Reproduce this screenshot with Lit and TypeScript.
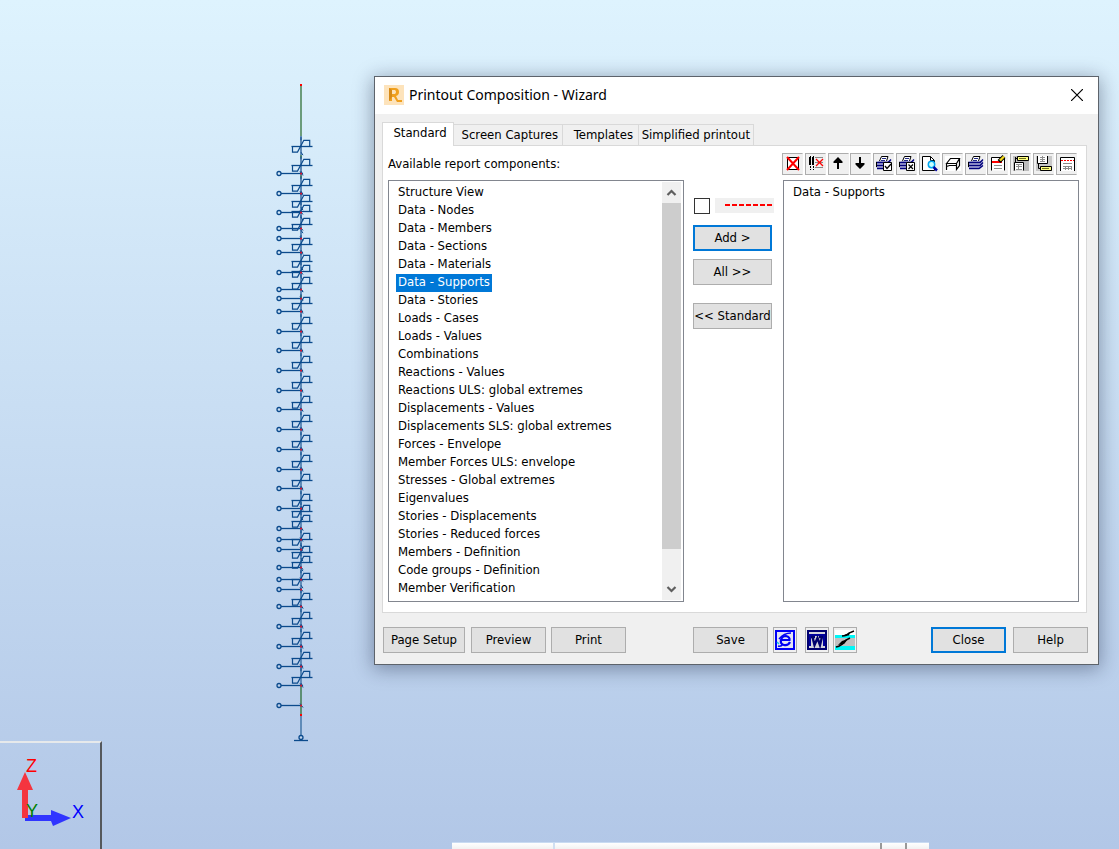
import { LitElement, html, svg, css } from "lit";
import { customElement, property, state } from "lit/decorators.js";

const COMPONENTS = [
  "Structure View", "Data - Nodes", "Data - Members", "Data - Sections", "Data - Materials",
  "Data - Supports", "Data - Stories", "Loads - Cases", "Loads - Values", "Combinations",
  "Reactions - Values", "Reactions ULS: global extremes", "Displacements - Values",
  "Displacements SLS: global extremes", "Forces - Envelope", "Member Forces ULS: envelope",
  "Stresses - Global extremes", "Eigenvalues", "Stories - Displacements",
  "Stories - Reduced forces", "Members - Definition", "Code groups - Definition",
  "Member Verification",
];

/* Heights of the rotational releases and of the lateral supports along the mast. */
const RELEASES = [
  146, 165, 185, 201, 211, 224, 244, 261, 271, 283, 303, 323, 342, 362, 382, 402, 421, 441,
  461, 480, 500, 511, 521, 539, 552, 562, 579, 599, 618, 638, 658, 677,
];
const SUPPORTS = [
  173, 193, 212, 228, 238, 252, 272, 289, 298, 311, 331, 350, 370, 390, 409, 429, 449, 469,
  488, 508, 528, 539, 549, 567, 579, 589, 606, 626, 646, 666, 685, 705,
];

@customElement("mast-model")
class MastModel extends LitElement {
  static styles = css`
    :host { display: block; }
    svg { display: block; }
    .ink { fill: none; stroke: #0b4a8c; stroke-width: 1.3; }
  `;
  render() {
    return html`<svg width="60" height="670" viewBox="265 80 60 670" aria-label="Mast model">
      <path d="M301 84V136" stroke="#6b9c7b" stroke-width="2" />
      <path d="M301 136V736" stroke="#5f8bb8" stroke-width="2" />
      <path d="M301 155V158M301 175V178M301 295V298M301 686V714" stroke="#5c8f74" stroke-width="2" />
      ${RELEASES.map((y) => svg`<g class="ink" transform="translate(301 ${y}.2)">
        <path d="M-9.500 .3H11.500" /><path d="M-8.500 0V5.900H-3.500L2.800-5.900H8.700V0" stroke-width="1.200" />
        <path d="M0-9V-6M0 6L2 9" stroke-width="1" /></g>`)}
      ${SUPPORTS.map((y) => svg`<g class="ink" transform="translate(301 ${y}.5)">
        <circle cx="-22" r="2" /><path d="M-20 0H1" /><path d="M-1-2L2 2" stroke-width="1" />
        <rect x="-.8" y="-.8" width="1.800" height="1.800" fill="#e0102a" stroke="none" /></g>`)}
      <path d="M300 84h2v2h-2zM300 714h2v2h-2z" fill="#f00" />
      <g class="ink"><circle cx="301" cy="737.500" r="2" fill="#c3d7ee" /><path d="M294 740.500H308" /></g>
    </svg>`;
  }
}

const printer = svg`
  <path d="M6.500 8L8.500 3.500H15L13.500 8" fill="#fff" stroke="#000" />
  <path d="M9 5.500H13M8 7.500H12" stroke="#222a88" />
  <path d="M3 10L6 8H15L18 7V13L15 16H5L3 14Z" fill="#b4b4dc" />
  <path d="M3 9.500H15L18 6.500M3 12.500H15L18 9.500M4 15.500H14L18 12.500" fill="none" stroke="#00007c" stroke-width="1.400" />
  <path d="M3.500 9V14" stroke="#000" />`;

const TOOLS: { name: string; icon: unknown }[] = [
  { name: "Delete all", icon: svg`<path d="M5.500 4.500H16.500V16.500H5.500Z" fill="#fff" stroke="#000" /><path d="M5 4L17 17M17 4L5 17" stroke="#f00" stroke-width="2" />` },
  { name: "Delete", icon: svg`<path d="M10 4.500H18M10 9.500H18M10 14.500H18" stroke="#8a8a8a" /><path d="M5 4V12M8 4V12" stroke="#000" stroke-width="2" /><path d="M5.500 3V4M8.500 3V4M5.500 13V15M8.500 13V15M5.500 16V17M8.500 16V17" stroke="#000" /><path d="M11 6L18 13M18 6L11 13" stroke="#f00" stroke-width="1.300" />` },
  { name: "Move up", icon: svg`<path d="M10 4L14.500 8.500V10H11V16H9V10H5.500V8.500Z" fill="#000" />` },
  { name: "Move down", icon: svg`<path d="M10 16L14.500 11.500V10H11V4H9V10H5.500V11.500Z" fill="#000" />` },
  { name: "Mark for printing", icon: svg`${printer}<path d="M10.500 9.500H18.500V17.500H10.500Z" fill="#fff" stroke="#000" /><path d="M12 13L14 15.500L18 11" fill="none" stroke="#000" stroke-width="1.300" />` },
  { name: "Exclude from printing", icon: svg`${printer}<path d="M10.500 9.500H18.500V17.500H10.500Z" fill="#fff" stroke="#000" /><path d="M12.500 11.500L17 16M17 11.500L12.500 16" stroke="#000" stroke-width="1.200" />` },
  { name: "Preview", icon: svg`<path d="M3.500 3.500H11.500L15.500 7.500V17.500H3.500Z" fill="#fff" stroke="#000" /><path d="M11.500 3.500V7.500H15" fill="none" stroke="#000" /><circle cx="12.500" cy="11.500" r="3.200" fill="#c8ffff" stroke="#00a5f0" stroke-width="1.500" /><path d="M14.500 14L18 17.500" stroke="#0000a0" stroke-width="2.500" />` },
  { name: "Page layout", icon: svg`<path d="M3 3H19V18H3Z" fill="#fff" /><path d="M4.500 10.500L8.500 5.500H17.500L14.500 10.500ZM4.500 10.500V17M14.500 10.500V16.500L17.500 12.500V5.500M4.500 13.500L7.500 12.500H14.500" fill="none" stroke="#000" stroke-width="1.200" />` },
  { name: "Print", icon: printer },
  { name: "Edit header", icon: svg`<path d="M4.500 17.500V4.500H17.500V17.500" fill="#fff" stroke="#000" /><path d="M5 9H15" stroke="#f00" stroke-width="2" /><path d="M7 12.500H15M7 15.500H15" stroke="#8a8a8a" /><path d="M12 8.500L17 3.500" stroke="#000" stroke-width="4" /><path d="M13 7.500L17 3.500" stroke="#f3d91c" stroke-width="2.400" />` },
  { name: "Header", icon: svg`<path d="M3 3H19V18H3Z" fill="#bdbdbd" /><path d="M7.500 3.500H18.500V7.500H7.500Z" fill="#ffff80" stroke="#000" /><path d="M9 5.500H16" stroke="#6d6d20" /><path d="M4.500 17.500V9.500H13.500V17.500" fill="#fff" stroke="#000" /><path d="M6 11.500H12M6 13.500H12M6 16.500H12M8.500 11V17" stroke="#909090" /><path d="M5.500 4V9M5.500 5.500H8" stroke="#000" />` },
  { name: "Footer", icon: svg`<path d="M3 3H19V18H3Z" fill="#c9c9c9" /><path d="M4.500 3V10.500H14.500V3" fill="#fff" stroke="#000" /><path d="M7 4.500H12M7 6.500H12M7 8.500H12M9.500 3V9" stroke="#909090" /><path d="M5.500 11V15.500H8" fill="none" stroke="#000" /><path d="M7.500 13.500H18.500V17.500H7.500Z" fill="#ffff80" stroke="#000" /><path d="M9 15.500H16" stroke="#6d6d20" />` },
  { name: "Page break", icon: svg`<path d="M4.500 18V4.500H18.500V18" fill="#fff" stroke="#000" /><path d="M5 7.500H18" stroke="#f00" stroke-dasharray="2 1" /><path d="M7 10.500H16M7 13.500H16M7 15.500H16M9.500 13V17M12.500 13V17M15.500 13V17" stroke="#8a8a8a" />` },
];

@customElement("report-toolbar")
class ReportToolbar extends LitElement {
  static styles = css`
    :host { display: flex; justify-content: space-between; }
    button {
      flex: none; width: 21px; height: 22px; padding: 0; margin: 0; overflow: hidden; display: block;
      background: #f0f0f0; border: 1px solid #adadad; border-right-color: #f0f0f0; border-radius: 0;
    }
    svg { display: block; width: 19px; height: 20px; }
  `;
  render() {
    return TOOLS.map((t) => html`<button aria-label=${t.name}>
      <svg viewBox="1 1 19 20">${t.icon}</svg></button>`);
  }
}

@customElement("axis-triad")
class AxisTriad extends LitElement {
  static styles = css`
    :host {
      display: block; box-sizing: border-box; width: 102px; height: 108px;
      border-top: 2px solid #e6e9eb; border-right: 2px solid #55585c;
    }
    svg { display: block; }
    text { font: 18px "Liberation Sans", sans-serif; }
  `;
  render() {
    return html`<svg width="100" height="106" viewBox="0 743 100 106" aria-label="Axes">
      <path d="M22 818V790H17L25 772L33 790H28V818Z" fill="#f4353f" />
      <path d="M25 815H51V810L71 818L53 826L51 821H25Z" fill="#3035ff" />
      <path d="M22 815H28V818H22Z" fill="#f4353f" />
      <text x="26" y="772" fill="#f00">Z</text>
      <text x="26" y="817" fill="#008000">Y</text>
      <text x="72" y="818" fill="#00f">X</text>
    </svg>`;
  }
}

@customElement("component-list")
class ComponentList extends LitElement {
  @property({ type: Array }) items: string[] = [];
  @property() selected = "";
  @property() label = "";
  @property({ type: Boolean }) scroll = false;
  static styles = css`
    :host { display: flex; border: 1px solid #82868f; background: #fff; min-width: 0; }
    select {
      flex: 1; min-width: 0; height: 420px; box-sizing: border-box; margin: 0; padding: 3px 0 3px 7px;
      border: 0; border-radius: 0; outline: 0; overflow: hidden; background: #fff; color: #000;
      font: 13px/18px var(--ui-font);
    }
    option {
      width: fit-content; min-height: 18px; height: 18px; padding: 0 2px; box-sizing: border-box;
      line-height: 18px;
    }
    option:checked {
      background: linear-gradient(#0078d7, #0078d7); -webkit-text-fill-color: #fff;
    }
    .bar { width: 19px; margin: 1px 2px 1px 0; background: #f0f0f0; display: flex; flex-direction: column; }
    .bar svg { width: 19px; height: 21px; flex: none; }
    .track { flex: 1; }
    .thumb { height: 92%; background: #cdcdcd; }
  `;
  render() {
    const arrow = (d: string) => html`<svg viewBox="0 0 19 21" aria-hidden="true">
      <path d=${d} fill="none" stroke="#5f5f5f" stroke-width="2.200" /></svg>`;
    return html`
      <select size="23" aria-label=${this.label}>
        ${this.items.map((i) => html`<option ?selected=${i === this.selected}>${i}</option>`)}
      </select>
      ${this.scroll ? html`<div class="bar">
        ${arrow("M5.500 13L9.500 9L13.500 13")}
        <div class="track"><div class="thumb"></div></div>
        ${arrow("M5.500 8L9.500 12L13.500 8")}
      </div>` : ""}`;
  }
}

@customElement("printout-wizard")
class PrintoutWizard extends LitElement {
  @state() tab = 0;
  static styles = css`
    :host {
      display: block; background: #f0f0f0; border: 1px solid #5d636b; color: #000;
      box-shadow: 0 3px 18px 1px rgba(20, 30, 60, 0.4); font: 13px/18px var(--ui-font);
    }
    button {
      box-sizing: border-box; height: 26px; padding: 0; margin: 0; border: 1px solid #adadad; border-radius: 0;
      background: #e1e1e1; color: #000; font: 13px/18px var(--ui-font); white-space: nowrap;
    }
    .primary { border: 2px solid #0078d7; }
    header { display: flex; align-items: center; height: 36px; background: #fff; padding: 0 13px 1px 9px; }
    header svg { flex: none; }
    h1 { flex: 1; margin: 0 0 0 5px; font: 14px/20px "Noto Sans", "Open Sans", sans-serif; }
    .x { border: 0; background: none; width: 16px; height: 16px; display: grid; place-items: center; }
    main { padding: 8px 11px 14px 7px; }
    .tabs { display: flex; align-items: flex-end; height: 23px; }
    .tab { height: 21px; border-color: #d9d9d9; border-bottom: 0; border-left: 0; background: #f0f0f0; text-align: right; }
    .tab.on {
      height: 24px; width: 72px; background: #fff; border-left: 1px solid #d9d9d9; padding-bottom: 3px;
      text-align: center; position: relative; z-index: 1; margin-bottom: -1px; padding-left: 4px;
    }
    .t1 { width: 109px; padding-right: 4px; }
    .t2 { width: 76px; padding-right: 5px; }
    .t3 { width: 115px; padding-right: 3px; }
    .panel {
      display: grid; grid-template-columns: 1fr 99px 1fr;
      border: 1px solid #d9d9d9; background: #fff; padding: 6px 7px 10px 5px;
    }
    .head { grid-column: 1 / 3; height: 28px; line-height: 24px; }
    report-toolbar { padding: 1px 2px 0 0; margin-left: -1px; }
    .mid { display: flex; flex-direction: column; padding: 18px 11px 0 9px; }
    .break { display: flex; gap: 5px; height: 16px; margin: 0 -2px 11px 1px; }
    input {
      appearance: none; flex: none; box-sizing: border-box; width: 16px; height: 16px; margin: 0;
      border: 1px solid #333; background: #fff;
    }
    .dash { flex: 1; height: 15px; background: #f0f0f0; }
    .dash svg { display: block; width: 100%; height: 15px; }
    .mid button + button { margin-top: 8px; }
    .mid .std { margin-top: 18px; }
    footer { display: flex; padding: 0 10px 11px 8px; }
    footer button { width: 75px; }
    footer .setup { width: 82px; margin-right: 6px; }
    .print { margin-left: 5px; }
    .save { margin-left: 67px; }
    footer .ico { width: 24px; margin-left: 5px; background: #f0f0f0; display: grid; place-items: center; }
    footer .word { margin-left: 8px; }
    footer .app { margin-left: 4px; }
    .close { margin-left: auto; margin-right: 7px; }
    .ico svg { display: block; }
  `;
  render() {
    const names = ["Standard", "Screen Captures", "Templates", "Simplified printout"];
    return html`
      <header>
        <svg width="20" height="20" viewBox="0 0 20 20" aria-hidden="true">
          <path d="M0 0H20V20H0Z" fill="#fde3bb" />
          <path d="M5 3H11Q15 3 15 7Q15 10 12 11L14 15H18V17H13L10 12H8V16H5Z" fill="#f0a01e" />
          <path d="M8 5H11Q13 7 11 9H8Z" fill="#fde3bb" /><path d="M5 3L8 5V12L5 16Z" fill="#d68a18" />
        </svg>
        <h1>Printout Composition - Wizard</h1>
        <button class="x" aria-label="Close window">
          <svg width="12" height="12" viewBox="0 0 12 12"><path d="M0 0L12 12M12 0L0 12" stroke="#000" stroke-width="1.200" /></svg>
        </button>
      </header>
      <main>
        <div class="tabs" role="tablist">
          ${names.map((n, i) => html`<button role="tab" aria-selected=${i === this.tab ? "true" : "false"}
            class="tab t${i} ${i === this.tab ? "on" : ""}" @click=${() => (this.tab = i)}>${n}</button>`)}
        </div>
        <section class="panel">
          <div class="head">Available report components:</div>
          <report-toolbar></report-toolbar>
          <component-list scroll label="Available report components" .items=${COMPONENTS} selected="Data - Supports"></component-list>
          <div class="mid">
            <div class="break">
              <input type="checkbox" aria-label="Insert page break" />
              <div class="dash"><svg aria-hidden="true"><path d="M10 7H80" stroke="#f00" stroke-width="2" stroke-dasharray="5 2" /></svg></div>
            </div>
            <button class="primary">Add &gt;</button>
            <button>All &gt;&gt;</button>
            <button class="std">&lt;&lt; Standard</button>
          </div>
          <component-list label="Selected components" .items=${["Data - Supports"]}></component-list>
        </section>
      </main>
      <footer>
        <button class="setup">Page Setup</button>
        <button>Preview</button>
        <button class="print">Print</button>
        <button class="save">Save</button>
        <button class="ico" aria-label="Save as HTML">
          <svg width="20" height="20" viewBox="0 0 20 20"><path d="M0 0H20V20H0Z" fill="#0000f5" /><path d="M2 2H18V18H2Z" fill="#e4e4f4" />
            <path d="M15 12Q13 16 9 15Q5 14 6 10Q7 6 11 6Q15 7 14.500 10H7" fill="none" stroke="#0000f5" stroke-width="2.200" />
            <path d="M2 12L4 14" stroke="#10c0e0" stroke-width="1.500" /><path d="M3 16Q6 17 8 14M4 9Q9 3 16 3" fill="none" stroke="#0000f5" stroke-width="1.400" /></svg>
        </button>
        <button class="ico word" aria-label="Save as Word document">
          <svg width="20" height="20" viewBox="0 0 20 20"><path d="M0 0H20V20H0Z" fill="#000070" /><path d="M2 2H18V18H2Z" fill="#d4d4dc" />
            <path d="M2 4H18V6H2ZM2 6H4V16H2ZM16 6H18V16H16Z" fill="#0000a0" />
            <path d="M4 7H8M12 7H16M5.500 7L7.500 15L10.500 8L13 15L15 7" fill="none" stroke="#00006c" stroke-width="2.400" /></svg>
        </button>
        <button class="ico app" aria-label="Save as spreadsheet">
          <svg width="22" height="22" viewBox="0 0 22 22"><path d="M1 1H21V6H1Z" fill="#fff" /><path d="M1 6H21V9H1Z" fill="#00f6f6" /><path d="M1 9H21V17H1Z" fill="#c0c0c0" /><path d="M1 17H21V21H1Z" fill="#00f6f6" />
            <path d="M2 18Q8 17 12 11L16 9M8 7Q13 7 15 4L20 2" fill="none" stroke="#000" stroke-width="1.400" /><path d="M4 16L8 12L14 10L10 15ZM10 6L16 3.500L15 6.500Z" fill="#000" /></svg>
        </button>
        <button class="primary close">Close</button>
        <button>Help</button>
      </footer>`;
  }
}

@customElement("app-root")
class AppRoot extends LitElement {
  static styles = css`
    :host {
      --ui-font: "DejaVu Sans Condensed", "Noto Sans", sans-serif;
      display: block; position: relative; height: 100vh; overflow: hidden;
      background: linear-gradient(#def3fe, #b2c7e7);
    }
    mast-model { position: absolute; left: 265px; top: 80px; }
    printout-wizard { position: absolute; left: 374px; right: 20px; top: 76px; }
    axis-triad { position: absolute; left: 0; bottom: 0; }
    .status {
      position: absolute; left: 452px; bottom: 0; width: 477px; height: 7px; box-sizing: border-box;
      border-top: 1px solid #c9dbf2; background: linear-gradient(#fff, #f2f2f2);
      display: grid; grid-template-columns: 101px 1fr 23px 22px; gap: 2px;
    }
    .status i { border-right: 2px solid #999; margin-right: -2px; }
    .status i:first-child { border-color: #d0dff2; }
    .status i:last-child { border: 0; }
  `;
  render() {
    return html`
      <mast-model></mast-model>
      <axis-triad></axis-triad>
      <div class="status"><i></i><i></i><i></i><i></i></div>
      <printout-wizard></printout-wizard>`;
  }
}
